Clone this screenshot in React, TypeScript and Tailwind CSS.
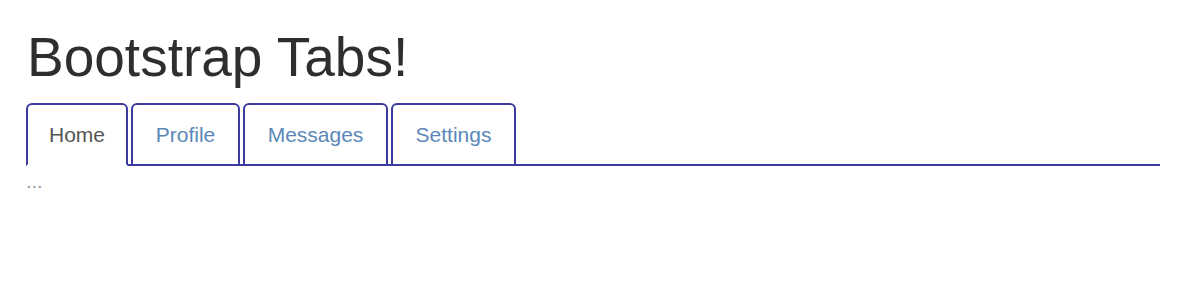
const tabs = [
  { label: 'Home', width: 'w-[102px]', active: true },
  { label: 'Profile', width: 'w-[109px]', active: false },
  { label: 'Messages', width: 'w-[145px]', active: false },
  { label: 'Settings', width: 'w-[125px]', active: false },
];

export default function App() {
  return (
    <div className="min-h-[303px] bg-white pl-[26px] pr-[40px] pt-[27px] font-['Liberation_Sans',Arial,sans-serif]">
      <h1 className="pl-[1px] text-[55px] leading-[1.1] text-[#2e2e2e]">Bootstrap Tabs!</h1>

      {/* Tab strip */}
      <ul className="mt-[15.5px] flex gap-[3px] border-b-2 border-[#3b3b9e]">
        {tabs.map((tab) => (
          <li
            key={tab.label}
            className={`-mb-[2px] flex h-[63px] ${tab.width} items-center justify-center rounded-t-[6px] border-2 border-[#3b3b9e] bg-white text-[21px] ${
              tab.active ? 'border-b-white text-[#555555]' : 'text-[#5b88b8]'
            }`}
          >
            {tab.label}
          </li>
        ))}
      </ul>

      {/* Tab content */}
      <div className="text-[20px] leading-[30px] text-[#9a9a9a]">...</div>
    </div>
  );
}
